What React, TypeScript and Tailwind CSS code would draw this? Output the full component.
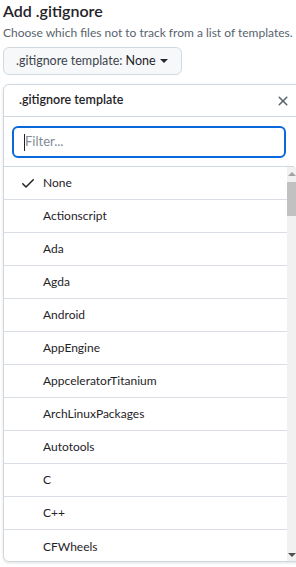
import React from "react";

const templates = [
    "None",
    "Actionscript",
    "Ada",
    "Agda",
    "Android",
    "AppEngine",
    "AppceleratorTitanium",
    "ArchLinuxPackages",
    "Autotools",
    "C",
    "C++",
    "CFWheels",
];

const CheckIcon = () => (
    <svg width="16" height="16" viewBox="0 0 16 16" className="fill-[#1f2328]">
        <path d="M13.78 4.22a.75.75 0 0 1 0 1.06l-7.25 7.25a.75.75 0 0 1-1.06 0L2.22 9.28a.751.751 0 0 1 .018-1.042.751.751 0 0 1 1.042-.018L6 10.94l6.72-6.72a.75.75 0 0 1 1.06 0Z" />
    </svg>
);

const XIcon = () => (
    <svg width="16" height="16" viewBox="0 0 16 16" className="fill-[#59636e]">
        <path d="M3.72 3.72a.75.75 0 0 1 1.06 0L8 6.94l3.22-3.22a.749.749 0 0 1 1.275.326.749.749 0 0 1-.215.734L9.06 8l3.22 3.22a.749.749 0 0 1-.326 1.275.749.749 0 0 1-.734-.215L8 9.06l-3.22 3.22a.751.751 0 0 1-1.042-.018.751.751 0 0 1-.018-1.042L6.94 8 3.72 4.78a.75.75 0 0 1 0-1.06Z" />
    </svg>
);

export default function App() {
    return (
        <div
            className="w-[296px] h-[567px] overflow-hidden bg-white text-[#1f2328]"
            style={{ fontFamily: 'Lato, "Open Sans", sans-serif' }}
        >
            <div className="pl-[3px]">
                <h2 className="text-[16px] font-semibold leading-[20px] pt-[1px]">
                    Add .gitignore
                </h2>
                <p className="text-[12px] text-[#59636e] leading-[18px] mt-[3px] whitespace-nowrap">
                    Choose which files not to track from a list of templates.
                </p>
                <button className="mt-[5px] h-[28px] pl-[12px] pr-[13px] flex items-center gap-[4px] rounded-md border border-[#d1d9e0] bg-[#f6f8fa] text-[12.5px] text-[#3d444d]">
                    <span>
                        .gitignore template: <span className="text-[#1f2328]">None</span>
                    </span>
                    <span className="w-0 h-0 border-l-[4px] border-r-[4px] border-t-[4px] border-l-transparent border-r-transparent border-t-[#25292e]" />
                </button>

                <div className="mt-[9px] w-[300px] h-[478px] rounded-l-md border border-[#d1d9e0] bg-white shadow-[0_1px_3px_rgba(0,0,0,0.12)] flex flex-col">
                    <div className="h-[32px] flex items-center justify-between pl-[15px] pr-[11px] border-b border-[#d1d9e0] shrink-0">
                        <span className="text-[12.5px] font-semibold">.gitignore template</span>
                        <XIcon />
                    </div>
                    <div className="px-[8px] pt-[9px] pb-[8px] border-b border-[#d1d9e0] shrink-0 w-[290px]">
                        <div className="h-[32px] rounded-md border-2 border-[#0969da] flex items-center pl-[10px]">
                            <span className="w-px h-[17px] bg-[#1f2328]" />
                            <span className="text-[13px] text-[#818b98]">Filter...</span>
                        </div>
                    </div>
                    <div className="flex flex-1 min-h-0 w-[293px]">
                        <div className="flex-1 overflow-hidden">
                            {templates.map((t, i) => (
                                <div
                                    key={t}
                                    className={
                                        "h-[33px] flex items-center text-[12px] " +
                                        (i < templates.length - 1 ? "border-b border-[#d8dee4]" : "")
                                    }
                                >
                                    <span className="w-[39px] pl-[16px] flex items-center">
                                        {i === 0 && <CheckIcon />}
                                    </span>
                                    <span>{t}</span>
                                </div>
                            ))}
                        </div>
                        <div className="w-[10px] bg-[#f1f1f1] flex flex-col items-center">
                            <div className="h-[13px] flex items-center justify-center">
                                <span className="w-0 h-0 border-l-[4px] border-r-[4px] border-b-[4px] border-l-transparent border-r-transparent border-b-[#a3a3a3]" />
                            </div>
                            <div className="w-full h-[34px] bg-[#c1c1c1] mt-[2px]" />
                            <div className="flex-1" />
                            <div className="h-[13px] flex items-center justify-center">
                                <span className="w-0 h-0 border-l-[4px] border-r-[4px] border-t-[4px] border-l-transparent border-r-transparent border-t-[#505050]" />
                            </div>
                        </div>
                    </div>
                </div>
            </div>
        </div>
    );
}
